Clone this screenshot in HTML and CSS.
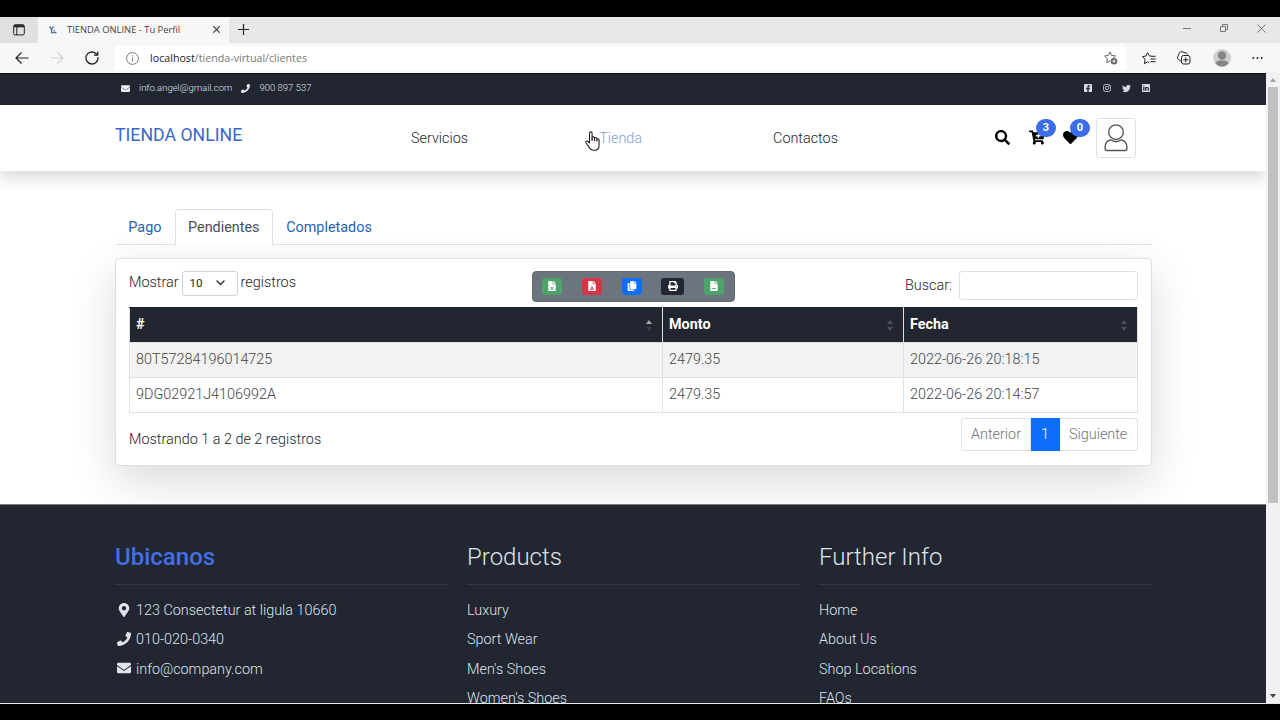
FILE: index.html
```html
<!DOCTYPE html>
<html lang="es">
<head>
  <meta charset="UTF-8">
  <meta name="viewport" content="width=device-width, initial-scale=1.0">
  <title>TIENDA ONLINE - Tu Perfil</title>
  <link rel="stylesheet" href="styles.css">
</head>
<body>
  <svg class="sprite" aria-hidden="true">
    <symbol id="envelope" viewBox="0 0 512 512"><path d="M502.3 190.8c3.9-3.1 9.7-.2 9.7 4.7V400c0 26.5-21.5 48-48 48H48c-26.5 0-48-21.5-48-48V195.6c0-5 5.7-7.8 9.7-4.7 22.4 17.4 52.1 39.5 154.1 113.6 21.1 15.4 56.7 47.8 92.2 47.6 35.7.3 72-32.8 92.3-47.6 102-74.1 131.6-96.3 154-113.7zM256 320c23.2.4 56.6-29.2 73.4-41.4 132.7-96.3 142.8-104.7 173.4-128.7 5.8-4.5 9.2-11.5 9.2-18.9v-19c0-26.5-21.5-48-48-48H48c-26.5 0-48 21.5-48 48v19c0 7.4 3.4 14.3 9.2 18.9 30.6 23.9 40.7 32.4 173.4 128.7 16.8 12.2 50.2 41.8 73.4 41.4z"/></symbol>
    <symbol id="phone" viewBox="0 0 512 512"><path d="M493.4 24.6l-104-24c-11.3-2.6-22.9 3.3-27.5 13.9l-48 112c-4.2 9.8-1.4 21.3 6.9 28l60.6 49.6c-36 76.7-98.9 140.5-177.2 177.2l-49.6-60.6c-6.8-8.3-18.2-11.1-28-6.9l-112 48C3.9 366.5-2 378.1.6 389.4l24 104C27.1 504.2 36.7 512 48 512c256.1 0 464-207.5 464-464 0-11.2-7.7-20.9-18.6-23.4z"/></symbol>
    <symbol id="marker" viewBox="0 0 384 512"><path d="M172.268 501.67C26.97 291.031 0 269.413 0 192 0 85.961 85.961 0 192 0s192 85.961 192 192c0 77.413-26.97 99.031-172.268 309.67-9.535 13.774-29.93 13.773-39.464 0zM192 272c44.183 0 80-35.817 80-80s-35.817-80-80-80-80 35.817-80 80 35.817 80 80 80z"/></symbol>
    <symbol id="copy" viewBox="0 0 448 512"><path d="M320 448v40c0 13.255-10.745 24-24 24H24c-13.255 0-24-10.745-24-24V120c0-13.255 10.745-24 24-24h72v296c0 30.879 25.121 56 56 56h168zm0-344V0H152c-13.255 0-24 10.745-24 24v368c0 13.255 10.745 24 24 24h272c13.255 0 24-10.745 24-24V128H344c-13.2 0-24-10.8-24-24zm120.971-31.029L375.029 7.029A24 24 0 0 0 358.059 0H352v96h96v-6.059a24 24 0 0 0-7.029-16.97z"/></symbol>
    <symbol id="print" viewBox="0 0 512 512"><path d="M448 192V77.25c0-8.49-3.37-16.62-9.37-22.63L393.37 9.37c-6-6-14.14-9.37-22.63-9.37H96C78.33 0 64 14.33 64 32v160c-35.35 0-64 28.65-64 64v112c0 8.84 7.16 16 16 16h48v96c0 17.67 14.33 32 32 32h320c17.67 0 32-14.33 32-32v-96h48c8.84 0 16-7.16 16-16V256c0-35.35-28.65-64-64-64zm-64 256H128v-96h256v96zm0-224H128V64h192v48c0 8.84 7.16 16 16 16h48v96zm48 72c-13.25 0-24-10.75-24-24 0-13.26 10.75-24 24-24s24 10.74 24 24c0 13.25-10.75 24-24 24z"/></symbol>
    <symbol id="file" viewBox="0 0 384 512"><path d="M224 136V0H24C10.7 0 0 10.7 0 24v464c0 13.3 10.7 24 24 24h336c13.3 0 24-10.7 24-24V160H248c-13.2 0-24-10.8-24-24zm160-14.1v6.1H256V0h6.1c6.4 0 12.5 2.5 17 7l97.9 98c4.5 4.5 7 10.6 7 16.9z"/></symbol>
  </svg>

  <!-- browser window -->
  <div class="titlebar">
    <div class="tab-menu">
      <svg width="12" height="12" viewBox="0 0 12 12" fill="none" stroke="#222"><rect x=".7" y=".7" width="10.6" height="10.2" rx="1.5"/><path d="M1 2.2h10" stroke-width="2.2"/><path d="M3.8 3v8"/></svg>
    </div>
    <div class="browser-tab">
      <svg width="8" height="8" viewBox="0 0 8 8" fill="none" stroke="#5672a8" stroke-width="1.3"><path d="M.5.5l2 2.800L4.500.5M2.500 3.300v3.200h5M4.500 4.300h1.500"/></svg>
      <span class="tab-title">TIENDA ONLINE - Tu Perfil</span>
      <svg width="7" height="7" viewBox="0 0 7 7" stroke="#333" stroke-width="1.1"><path d="M.3.3l6.4 6.4M6.7.3L.3 6.7"/></svg>
    </div>
    <svg class="new-tab" width="11" height="11" viewBox="0 0 11 11" stroke="#222" stroke-width="1.2"><path d="M5.5 0v11M0 5.5h11"/></svg>
    <div class="window-buttons">
      <svg width="8" height="8" viewBox="0 0 8 8" stroke="#777"><path d="M0 4.5h8"/></svg>
      <svg width="8" height="8" viewBox="0 0 8 8" fill="none" stroke="#777"><path d="M.5 2.5h5v5h-5zM2.5 2.5v-2h5v5h-2"/></svg>
      <svg width="9" height="9" viewBox="0 0 9 9" stroke="#777"><path d="M.5.5l8 8M8.5.5l-8 8"/></svg>
    </div>
  </div>
  <div class="toolbar">
    <svg class="nav-icon" width="14" height="12" viewBox="0 0 14 12" fill="none" stroke="#222" stroke-width="1.2"><path d="M6.5.5L1 6l5.5 5.5M1 6h12.5"/></svg>
    <svg class="nav-icon" width="14" height="12" viewBox="0 0 14 12" fill="none" stroke="#d4d4d4" stroke-width="1.2"><path d="M7.5.5L13 6l-5.500 5.500M13 6H.5"/></svg>
    <svg class="nav-icon reload" width="14" height="14" viewBox="0 0 14 14" fill="none" stroke="#222" stroke-width="1.3"><path d="M12.9 6.200A6 6 0 1 1 10.800 2.400L12.500 4M12.700.6v3.600H9"/></svg>
    <div class="address">
      <svg width="13" height="13" viewBox="0 0 13 13" fill="none" stroke="#777"><circle cx="6.5" cy="6.5" r="5.9"/><path d="M6.5 5.500v4M6.500 3.300v1.100"/></svg>
      <span class="url">localhost<span>/tienda-virtual/clientes</span></span>
      <svg width="14" height="14" viewBox="0 0 14 14" fill="none" stroke="#666"><path d="M6 .9l1.600 3.500 3.900.5-2.900 2.700M6 .9L4.400 4.400.6 5l2.800 2.700-.7 4L6 9.800"/><circle cx="10" cy="10.200" r="3.300" fill="#666" stroke="none"/><path d="M8.200 10.200h3.600M10 8.400v3.600" stroke="#fff" stroke-width=".8"/></svg>
    </div>
    <div class="tools">
      <svg width="14" height="13" viewBox="0 0 14 13" fill="none" stroke="#222"><path d="M8.700 3.800L7.300 3.700 5.500.7 4 4 .6 4.600 3 7.200l-.5 4.600L5.500 9.800 7 10.700M8.500 4.300h5M8.500 7h5M8.500 9.700h5"/></svg>
      <svg width="14" height="14" viewBox="0 0 14 14" fill="none" stroke="#222"><path d="M3.800 10L1.300 8.400A2 2 0 0 1 .7 5.800l1.800-4A2 2 0 0 1 5 .8l4.500 1.400a2 2 0 0 1 1.200 1.300"/><rect x="4.500" y="4.500" width="8.500" height="8.500" rx="2"/><path d="M8.750 6.300v5M6.250 8.800h5"/></svg>
      <svg width="18" height="18" viewBox="0 0 18 18" fill="#858585"><circle cx="9" cy="9" r="9" fill="#cfcfcf"/><circle cx="9" cy="6.500" r="4.200"/><path d="M2.500 14.500C3 12 5.500 11.500 9 11.500s6 .5 6.500 3A9 9 0 0 1 9 17.500a9 9 0 0 1-6.500-3z"/></svg>
      <svg width="11" height="4" viewBox="0 0 11 4" fill="#222"><circle cx="1.300" cy="2" r="1"/><circle cx="5.500" cy="2" r="1"/><circle cx="9.700" cy="2" r="1"/></svg>
    </div>
  </div>

  <div class="viewport">
    <div class="page">
      <nav class="top-nav">
        <div class="container">
          <div class="contact">
            <svg class="icon-top"><use href="#envelope"/></svg>
            <span class="email">info.angel@gmail.com</span>
            <svg class="icon-top call"><use href="#phone"/></svg>
            <span>900 897 537</span>
          </div>
          <div class="social">
            <svg width="8" height="8" viewBox="0 32 448 448"><path d="M400 32H48A48 48 0 0 0 0 80v352a48 48 0 0 0 48 48h137.250V327.690h-63V256h63v-54.640c0-62.150 37-96.480 93.670-96.480 27.140 0 55.520 4.840 55.520 4.840v61h-31.270c-30.810 0-40.420 19.120-40.420 38.730V256h68.780l-11 71.690h-57.780V480H400a48 48 0 0 0 48-48V80a48 48 0 0 0-48-48z"/></svg>
            <svg width="8" height="8" viewBox="0 0 16 16" fill="none" stroke="#c5cad6" stroke-width="1.700"><rect class="hollow" x="1" y="1" width="14" height="14" rx="4"/><circle class="hollow" cx="8" cy="8" r="3.300"/><circle cx="12" cy="4" r=".5"/></svg>
            <svg width="9" height="9" viewBox="0 0 512 512"><path d="M459.370 151.716c.325 4.548.325 9.097.325 13.645 0 138.720-105.583 298.558-298.558 298.558-59.452 0-114.680-17.219-161.137-47.106 8.447.974 16.568 1.299 25.340 1.299 49.055 0 94.213-16.568 130.274-44.832-46.132-.975-84.792-31.188-98.112-72.772 6.498.974 12.995 1.624 19.818 1.624 9.421 0 18.843-1.300 27.614-3.573-48.081-9.747-84.143-51.980-84.143-102.985v-1.299c13.969 7.797 30.214 12.670 47.431 13.319-28.264-18.843-46.781-51.005-46.781-87.391 0-19.492 5.197-37.360 14.294-52.954 51.655 63.675 129.300 105.258 216.365 109.807-1.624-7.797-2.599-15.918-2.599-24.040 0-57.828 46.782-104.934 104.934-104.934 30.213 0 57.502 12.670 76.670 33.137 23.715-4.548 46.456-13.320 66.599-25.340-7.798 24.366-24.366 44.833-46.132 57.827 21.117-2.273 41.584-8.122 60.426-16.243-14.292 20.791-32.161 39.308-52.628 54.253z"/></svg>
            <svg width="8" height="8" viewBox="0 32 448 448"><path d="M416 32H31.900C14.300 32 0 46.500 0 64.300v383.400C0 465.500 14.300 480 31.900 480H416c17.600 0 32-14.500 32-32.300V64.300c0-17.800-14.400-32.300-32-32.300zM135.400 416H69V202.200h66.500V416zm-33.200-243c-21.300 0-38.500-17.300-38.500-38.500S80.900 96 102.200 96c21.200 0 38.500 17.300 38.500 38.500 0 21.300-17.200 38.500-38.500 38.500zm282.100 243h-66.400V312c0-24.800-.5-56.700-34.500-56.700-34.600 0-39.900 27-39.900 54.900V416h-66.400V202.200h63.700v29.200h.9c8.900-16.800 30.600-34.500 62.900-34.500 67.200 0 79.700 44.300 79.700 101.900V416z"/></svg>
          </div>
        </div>
      </nav>

      <header class="header">
        <div class="container">
          <a class="brand">TIENDA ONLINE</a>
          <ul class="menu">
            <li>Servicios</li>
            <li class="hover">Tienda
              <svg class="cursor" width="15" height="20" viewBox="0 0 15 20" fill="#fff" stroke="#222" stroke-width="1.100" stroke-linejoin="round"><path d="M4.500 12V2.200a1.300 1.300 0 0 1 2.600 0V8 6.800a1.200 1.200 0 0 1 2.400.2v1.300-.7a1.200 1.200 0 0 1 2.400.2v1.400-.5a1.100 1.100 0 0 1 2.200.2V14c0 3-1.600 5.200-4.300 5.200H8.300c-2 0-3-1-4-2.600L1 11.800c-.8-1.400.8-2.400 1.900-1.400z"/><path d="M7.100 7.500V10M9.500 7.700V10.300M11.900 8.500v2" fill="none"/></svg>
            </li>
            <li>Contactos</li>
          </ul>
          <div class="actions">
            <svg class="search" width="15" height="15" viewBox="0 0 512 512"><path d="M505 442.700L405.300 343c-4.500-4.500-10.600-7-17-7H372c27.600-35.300 44-79.700 44-128C416 93.100 322.900 0 208 0S0 93.100 0 208s93.100 208 208 208c48.300 0 92.700-16.400 128-44v16.300c0 6.400 2.500 12.500 7 17l99.700 99.700c9.400 9.400 24.600 9.400 33.900 0l28.300-28.300c9.400-9.400 9.400-24.600.1-34zM208 336c-70.700 0-128-57.200-128-128 0-70.700 57.200-128 128-128 70.700 0 128 57.200 128 128 0 70.700-57.200 128-128 128z"/></svg>
            <span class="counter">
              <svg width="16" height="15" viewBox="0 0 576 512"><path d="M504.717 320H211.572l6.545 32h268.418c15.401 0 26.816 14.301 23.403 29.319l-5.517 24.276C523.112 414.668 536 433.828 536 456c0 31.202-25.519 56.444-56.824 55.994-29.823-.429-54.350-24.631-55.155-54.447-.44-16.287 6.085-31.049 16.803-41.548H231.176C241.553 426.165 248 440.326 248 456c0 31.813-26.528 57.431-58.670 55.938-28.540-1.325-51.751-24.385-53.251-52.917-1.158-22.034 10.436-41.455 28.051-51.586L93.883 64H24C10.745 64 0 53.255 0 40V24C0 10.745 10.745 0 24 0h102.529c11.401 0 21.228 8.021 23.513 19.190L159.208 64H551.990c15.401 0 26.816 14.301 23.403 29.319l-47.273 208C525.637 312.246 515.923 320 504.717 320zM408 168h-48v-40c0-8.837-7.163-16-16-16h-16c-8.837 0-16 7.163-16 16v40h-48c-8.837 0-16 7.163-16 16v16c0 8.837 7.163 16 16 16h48v40c0 8.837 7.163 16 16 16h16c8.837 0 16-7.163 16-16v-40h48c8.837 0 16-7.163 16-16v-16c0-8.837-7.163-16-16-16z"/></svg>
              <span class="badge">3</span>
            </span>
            <span class="counter">
              <svg width="15" height="15" viewBox="0 0 512 512"><path d="M462.300 62.600C407.500 15.900 326 24.300 275.700 76.200L256 96.500l-19.700-20.300C186.100 24.300 104.500 15.900 49.700 62.600c-62.800 53.600-66.100 149.800-9.900 207.900l193.500 199.800c12.500 12.900 32.800 12.900 45.300 0l193.500-199.800c56.300-58.100 53-154.300-9.800-207.900z"/></svg>
              <span class="badge">0</span>
            </span>
            <span class="avatar">
              <svg width="24" height="28" viewBox="0 0 24 28" fill="none" stroke="#555" stroke-width="1.400"><circle cx="12" cy="8.200" r="7.300"/><path d="M6.500 15.800C3 16.800 1.200 19 1.200 22.500v2.700q0 1.300 1.300 1.300h19q1.300 0 1.300-1.300v-2.700c0-3.500-1.800-5.700-5.300-6.700-3.300 2.300-7.700 2.300-11 0z"/></svg>
            </span>
          </div>
        </div>
      </header>

      <main class="container">
        <ul class="tabs">
          <li>Pago</li>
          <li class="active">Pendientes</li>
          <li>Completados</li>
        </ul>

        <div class="card">
          <div class="table-top">
            <label class="length">Mostrar
              <span class="select">10
                <svg width="9" height="6" viewBox="0 0 9 6" fill="none" stroke="#343a40" stroke-width="1.500" stroke-linecap="round"><path d="M1 1l3.500 3.500L8 1"/></svg>
              </span>
              registros
            </label>
            <div class="export">
              <span class="btn green"><svg><use href="#file"/></svg><svg class="mark" viewBox="0 0 6 6"><path d="M1.500 1l3 4M4.500 1l-3 4"/></svg></span>
              <span class="btn red"><svg><use href="#file"/></svg><svg class="mark" viewBox="0 0 6 6"><path d="M3 .5C3 3 2 4.500.8 5c1-1.500 3-1.800 4.400-1.200C4 3.500 3 2.500 3 .5"/></svg></span>
              <span class="btn blue"><svg><use href="#copy"/></svg></span>
              <span class="btn dark"><svg><use href="#print"/></svg></span>
              <span class="btn green"><svg><use href="#file"/></svg><svg class="mark" viewBox="0 0 6 6"><path d="M1 3h4"/></svg></span>
            </div>
            <label class="filter">Buscar: <input type="search"></label>
          </div>

          <table class="table">
            <thead>
              <tr>
                <th class="col-id">#<i class="sort asc"></i></th>
                <th class="col-amount">Monto<i class="sort"></i></th>
                <th>Fecha<i class="sort"></i></th>
              </tr>
            </thead>
            <tbody>
              <tr><td>80T57284196014725</td><td>2479.35</td><td>2022-06-26 20:18:15</td></tr>
              <tr><td>9DG02921J4106992A</td><td>2479.35</td><td>2022-06-26 20:14:57</td></tr>
            </tbody>
          </table>

          <div class="table-bottom">
            <span class="info">Mostrando 1 a 2 de 2 registros</span>
            <div class="pagination">
              <span class="prev">Anterior</span><span class="current">1</span><span class="next">Siguiente</span>
            </div>
          </div>
        </div>
      </main>

      <footer class="footer">
        <div class="container">
          <div class="col">
            <h2 class="logo">Ubicanos</h2>
            <ul>
              <li><svg class="fa"><use href="#marker"/></svg>123 Consectetur at ligula 10660</li>
              <li><svg class="fa"><use href="#phone"/></svg>010-020-0340</li>
              <li><svg class="fa"><use href="#envelope"/></svg>info@company.com</li>
            </ul>
          </div>
          <div class="col">
            <h2>Products</h2>
            <ul>
              <li>Luxury</li>
              <li>Sport Wear</li>
              <li>Men's Shoes</li>
              <li>Women's Shoes</li>
            </ul>
          </div>
          <div class="col">
            <h2>Further Info</h2>
            <ul>
              <li>Home</li>
              <li>About Us</li>
              <li>Shop Locations</li>
              <li>FAQs</li>
            </ul>
          </div>
        </div>
      </footer>
    </div>

    <div class="scrollbar">
      <span class="arrow up"></span>
      <span class="thumb"></span>
      <span class="arrow down"></span>
    </div>
  </div>
</body>
</html>
```
FILE: styles.css
```css
* {
  box-sizing: border-box;
}
body {
  margin: 0;
  padding: 17px 0 16px;
  height: 720px;
  display: flex;
  flex-direction: column;
  background: #000;
  font-family: Roboto, sans-serif;
  font-weight: 300;
  font-size: 14.4px;
  line-height: 22px;
  color: #212529;
  overflow: hidden;
}
svg {
  display: block;
  flex-shrink: 0;
}
ul {
  list-style: none;
  margin: 0;
  padding: 0;
}
.sprite {
  position: absolute;
  width: 0;
  height: 0;
}

/* browser window */
.titlebar {
  height: 26px;
  flex-shrink: 0;
  display: flex;
  align-items: center;
  background: #e8e8e7;
  font-family: "Open Sans", sans-serif;
}
.tab-menu {
  width: 38px;
  height: 26px;
  padding: 7px 13px;
  background: #e0e0e0;
  border-radius: 0 0 4px 0;
}
.browser-tab {
  width: 191px;
  height: 26px;
  display: flex;
  align-items: center;
  padding: 0 9px 1px 11px;
  background: #f7f7f7;
}
.tab-title {
  flex: 1;
  margin-left: 10px;
  font-size: 9.4px;
  font-weight: 400;
  color: #444;
  white-space: nowrap;
}
.new-tab {
  margin: 0 0 1px 9px;
}
.window-buttons {
  display: flex;
  align-items: center;
  gap: 29px;
  margin-left: auto;
  padding: 0 14px 4px 0;
}
.toolbar {
  height: 30px;
  flex-shrink: 0;
  display: flex;
  align-items: center;
  padding: 0 17px 0 15px;
  background: #f7f7f7;
}
.nav-icon {
  margin-right: 21px;
}
.reload {
  margin-right: 16px;
}
.address {
  width: 1011px;
  height: 24px;
  display: flex;
  align-items: center;
  padding: 0 8px 0 11px;
  background: #fff;
  border-radius: 3px;
}
.url {
  flex: 1;
  margin-left: 11px;
  font-family: "Open Sans", sans-serif;
  font-weight: 400;
  font-size: 10.7px;
  color: #222;
}
.url span {
  color: #777;
}
.tools {
  flex: 1;
  display: flex;
  align-items: center;
  justify-content: space-between;
  padding-left: 16px;
}

/* visible part of the page */
.viewport {
  flex: 1;
  min-height: 0;
  display: flex;
  background: #fff;
  border-bottom: 1px solid #e4e9ea;
}
.page {
  flex: 1;
  overflow: hidden;
}
.container {
  width: 1037px;
  margin-left: 115px;
}
.top-nav {
  height: 32px;
  background: #212630;
  border-top: 1px solid #0d0f16;
  color: #dfe3ec;
  font-size: 9.5px;
}
.top-nav .container {
  height: 28px;
  display: flex;
  align-items: center;
  justify-content: space-between;
  padding: 0 2px 0 6px;
}
.contact {
  display: flex;
  align-items: center;
}
.icon-top {
  width: 9px;
  height: 9px;
  fill: #eef0f6;
}
.email {
  margin: 0 9px;
}
.call {
  margin-right: 9px;
}
.social {
  display: flex;
  align-items: center;
  gap: 11px;
  fill: #d5daea;
}
.hollow {
  fill: none;
}
.header {
  position: relative;
  height: 66px;
  background: #fff;
  box-shadow: 0 7px 15px rgba(0, 0, 0, .15);
}
.header .container {
  display: flex;
}
.brand {
  width: 296px;
  padding-top: 19px;
  font-size: 17.7px;
  font-weight: 400;
  color: #3b66c8;
}
.menu {
  width: 427px;
  display: flex;
  justify-content: space-between;
  padding-top: 23px;
}
.menu li {
  position: relative;
}
.menu .hover {
  color: #7f9fd2;
}
.cursor {
  position: absolute;
  left: -14px;
  top: 3px;
}
.actions {
  display: flex;
  align-items: center;
  height: 65px;
  margin-left: 157px;
}
.search {
  margin-right: 19px;
}
.counter {
  position: relative;
  margin-right: 18px;
}
.badge {
  position: absolute;
  left: 7px;
  top: -11px;
  width: 20px;
  height: 18px;
  border-radius: 9px;
  background: #3b6de8;
  color: #fff;
  font-size: 11px;
  font-weight: 700;
  line-height: 17px;
  text-align: center;
}
.avatar {
  width: 40px;
  height: 40px;
  padding: 5px 7px;
  border: 1px solid #dee2e6;
  border-radius: 3px;
}
main {
  padding: 38px 0;
}
.tabs {
  display: flex;
  height: 36px;
  border-bottom: 1px solid #dee2e6;
}
.tabs li {
  height: 36px;
  padding: 6px 12.3px;
  line-height: 23px;
  font-weight: 400;
  border: 1px solid transparent;
  border-bottom: 0;
  color: #2563b0;
}
.tabs .active {
  background: #fff;
  border-color: #dee2e6;
  border-radius: 4px 4px 0 0;
  color: #495057;
}
.card {
  height: 208px;
  margin-top: 13px;
  padding: 12px 13px;
  background: #fff;
  border: 1px solid #dfdfdf;
  border-radius: 4px;
  box-shadow: 0 15px 45px rgba(0, 0, 0, .15);
}
.table-top {
  height: 36px;
  display: flex;
  align-items: flex-start;
  justify-content: space-between;
}
.length,
.filter {
  display: flex;
  align-items: center;
}
.length {
  width: 403px;
  gap: 3px;
  height: 25px;
  padding-bottom: 2px;
}
.select {
  width: 56px;
  height: 25px;
  margin-top: 2px;
  display: flex;
  align-items: center;
  justify-content: space-between;
  padding: 0 12px 1px 7px;
  border: 1px solid #ced4da;
  border-radius: 3px;
  font-size: 11.6px;
  font-weight: 400;
}
.export {
  display: flex;
  align-items: center;
  width: 203px;
  height: 31px;
  padding: 0 10px 1px 9px;
  justify-content: space-between;
  background: #6c757d;
  border: 1px solid #62696f;
  border-radius: 4px;
}
.btn {
  position: relative;
  width: 20px;
  height: 17px;
  display: flex;
  align-items: center;
  justify-content: center;
  border-radius: 3px;
  fill: #fff;
}
.btn svg {
  width: 10px;
  height: 10px;
}
.btn .mark {
  position: absolute;
  left: 7px;
  top: 8px;
  width: 6px;
  height: 5px;
  fill: none;
  stroke: #3c8f5c;
}
.green {
  background: #4ea368;
}
.red {
  background: #d43547;
}
.red .mark {
  stroke: #d43547;
}
.blue {
  background: #0d6efd;
}
.dark {
  width: 23px;
  background: #212630;
}
.filter {
  width: 403px;
  justify-content: flex-end;
  gap: 7px;
}
.filter input {
  width: 179px;
  height: 29px;
  border: 1px solid #dde1e5;
  border-radius: 3px;
  background: #fff;
}
.table {
  width: 1009px;
  table-layout: fixed;
  border-collapse: collapse;
}
.table th,
.table td {
  height: 35px;
  padding: 0 6px;
  border: 1px solid #dee2e6;
  text-align: left;
  line-height: 20px;
}
.table th {
  position: relative;
  background: #212630;
  border-top-color: #212630;
  color: #fff;
  font-weight: 700;
}
.table td {
  color: #41464b;
}
.col-id {
  width: 533px;
}
.col-amount {
  width: 241px;
}
.table tbody tr:first-child {
  background: #f2f2f2;
}
.sort {
  position: absolute;
  right: 10px;
  top: 12px;
  width: 6px;
  height: 11px;
}
.sort::before,
.sort::after {
  content: "";
  display: block;
  border: 3px solid transparent;
  border-top-width: 0;
  border-bottom: 4px solid #4b505a;
}
.sort::after {
  margin-top: 3px;
  border-top: 4px solid #4b505a;
  border-bottom-width: 0;
}
.asc::before {
  border-bottom-color: #a9adb4;
}
.asc::after {
  border-top-color: #3a3f49;
}
.table-bottom {
  display: flex;
  justify-content: space-between;
  padding-top: 5px;
}
.info {
  padding-top: 11px;
}
.pagination {
  display: flex;
  height: 33px;
}
.pagination span {
  padding: 5px 9px 4px;
  border: 1px solid #dee2e6;
  color: #6c757d;
}
.pagination .prev {
  width: 70px;
  border-radius: 3px 0 0 3px;
}
.pagination .current {
  width: 29px;
  background: #0d6efd;
  border-color: #0d6efd;
  color: #fff;
}
.pagination .next {
  width: 78px;
  border-left: 0;
  border-radius: 0 3px 3px 0;
}
.footer {
  position: relative;
  height: 240px;
  background: #212630;
  border-top: 1px solid #75807f;
  color: #dfe3ec;
}
.footer .container {
  display: grid;
  grid-template-columns: repeat(3, 333px);
  column-gap: 19px;
  padding-top: 36px;
}
.footer h2 {
  height: 44px;
  margin: 0 0 15px;
  padding-top: 1px;
  border-bottom: 1px solid #303740;
  font-size: 24px;
  font-weight: 300;
  line-height: 30px;
}
.footer .logo {
  font-weight: 500;
  color: #4270e4;
}
.footer li {
  display: flex;
  align-items: center;
  height: 22px;
  margin-bottom: 7.3px;
}
.fa {
  width: 14px;
  height: 14px;
  margin: -3px 5px 0 2px;
  fill: #dfe3ec;
}

.scrollbar {
  width: 14px;
  display: flex;
  flex-direction: column;
  align-items: center;
  background: #f1f1f1;
}
.arrow {
  border: 3px solid transparent;
}
.up {
  margin: 2px 0 5px;
  border-bottom: 4px solid #a0a0a0;
}
.thumb {
  width: 10px;
  height: 416px;
  background: #c1c1c1;
}
.down {
  margin: auto 0 2px;
  border-top: 4px solid #444;
}
```
